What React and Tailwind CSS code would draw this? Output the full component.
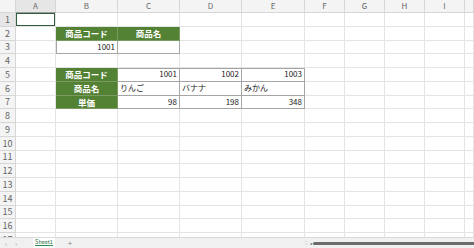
const cols = ['A', 'B', 'C', 'D', 'E', 'F', 'G', 'H', 'I', ''];
const gridCols = 'grid grid-cols-[16px_40px_62px_62px_62px_63px_40px_40px_40px_40px_1fr]';

// table cells: head = green header, num = right aligned number, txt = left text
const cells = {
  B2: { text: '商品コード', kind: 'head' },
  C2: { text: '商品名', kind: 'head' },
  B3: { text: '1001', kind: 'num', left: true },
  C3: { text: '', kind: 'txt' },
  B5: { text: '商品コード', kind: 'head' },
  C5: { text: '1001', kind: 'num', top: true },
  D5: { text: '1002', kind: 'num', top: true },
  E5: { text: '1003', kind: 'num', top: true },
  B6: { text: '商品名', kind: 'head' },
  C6: { text: 'りんご', kind: 'txt' },
  D6: { text: 'バナナ', kind: 'txt' },
  E6: { text: 'みかん', kind: 'txt' },
  B7: { text: '単価', kind: 'head' },
  C7: { text: '98', kind: 'num' },
  D7: { text: '198', kind: 'num' },
  E7: { text: '348', kind: 'num' },
};

function Cell({ id }) {
  const c = cells[id];
  if (id === 'A1') {
    return <div className="h-full border-r border-b border-[#e4e4e4] shadow-[inset_0_0_0_1px_#2f5d3e]" />;
  }
  if (!c) return <div className="h-full border-r border-b border-[#e4e4e4]" />;
  if (c.kind === 'head') {
    return (
      <div className="h-full flex items-center justify-center bg-[#548235] border-r border-b border-[#7b9a62] text-white font-bold text-[8.5px] leading-none">
        {c.text}
      </div>
    );
  }
  return (
    <div
      className={`h-full flex items-center px-[2px] border-r border-b border-[#a6a6a6] text-[8px] leading-none text-[#222] ${
        c.kind === 'num' ? 'justify-end' : 'justify-start'
      } ${c.top ? 'shadow-[inset_0_1px_0_#a6a6a6]' : ''} ${c.left ? 'shadow-[inset_1px_0_0_#a6a6a6]' : ''}`}
    >
      {c.text}
    </div>
  );
}

export default function App() {
  const rows = Array.from({ length: 17 }, (_, i) => i + 1);

  return (
    <div
      className="w-[474px] h-[248px] overflow-hidden bg-white flex flex-col"
      style={{ fontFamily: '"Noto Sans CJK JP", "Noto Sans", sans-serif' }}
    >
      {/* column headers */}
      <div className={`${gridCols} h-[13px] shrink-0 bg-[#f4f4f4]`}>
        <div className="border-r border-b border-[#d6d6d6]" />
        {cols.map((c, i) => (
          <div
            key={i}
            className={`flex items-center justify-center border-r border-b border-[#d6d6d6] text-[8px] leading-none text-[#666] ${
              c === 'A' ? 'bg-[#e6e6e6] border-b-[#9a9a9a]' : ''
            }`}
          >
            {c}
          </div>
        ))}
      </div>

      {/* rows */}
      <div className="flex-1 overflow-hidden">
        {rows.map((r) => (
          <div key={r} className={`${gridCols} h-[13.75px]`}>
            <div
              className={`flex items-center justify-center border-r border-b border-[#d6d6d6] text-[9px] leading-none text-[#666] ${
                r === 1 ? 'bg-[#e6e6e6]' : 'bg-[#f4f4f4]'
              }`}
            >
              {r}
            </div>
            {cols.map((c, i) => (
              <Cell key={i} id={`${c}${r}`} />
            ))}
          </div>
        ))}
      </div>

      {/* sheet tabs & scroll bar */}
      <div className="h-[11px] shrink-0 flex items-center bg-[#f0f0f0] border-t border-[#dadada] text-[#a5a5a5]">
        <div className="w-[33px] h-full flex items-center">
          <span className="w-[12px] pl-[5px] text-[7px] leading-none">‹</span>
          <span className="w-[12px] pl-[3px] text-[7px] leading-none">›</span>
        </div>
        <div className="h-full w-[22px] bg-white flex items-center justify-center">
          <span className="text-[5.5px] leading-none text-[#1e6b3a] border-b border-[#2e8a50]">Sheet1</span>
        </div>
        <div className="w-[30px] text-center text-[7px] leading-none text-[#777]">+</div>
        <div className="flex-1" />
        <div className="w-[8px] text-center text-[6px] leading-none">⁝</div>
        <div className="w-[164px] flex items-center gap-[1px]">
          <span className="text-[4px] text-[#555] leading-none">◂</span>
          <div className="flex-1 h-[3px] rounded-l-full bg-[#6b6b6b]" />
        </div>
      </div>
    </div>
  );
}
